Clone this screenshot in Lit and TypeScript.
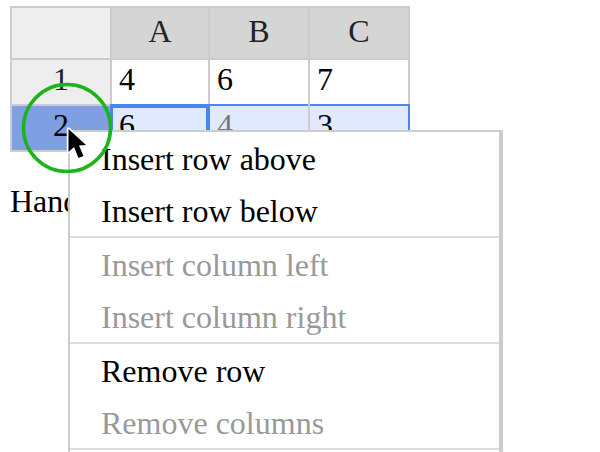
import { LitElement, html, css } from "lit";
import { customElement } from "lit/decorators.js";

@customElement("app-root")
export class AppRoot extends LitElement {
  static styles = css`
    :host { display: block; width: 600px; height: 452px; overflow: hidden; position: relative; background: #fff;
      font-family: "Liberation Serif", "Times New Roman", serif; font-size: 32px; color: #000; }
    .page { padding: 6px 10px 0; }
    .grid { display: grid; width: 400px; box-sizing: border-box; padding: 2px; gap: 2px; background: #ccc;
      grid-template-columns: 98px 96px 98px 98px; grid-template-rows: 50px 44px 44px; }
    .cell { box-sizing: border-box; padding: 0 7px; line-height: 38px; background: #fff; white-space: nowrap; }
    .corner { background: #eee; }
    .col { background: #d5d5d5; text-align: center; line-height: 46px; color: #222; }
    .row { background: #eee; text-align: center; color: #222; }
    .row.sel { background: #7f9fe2; color: #000; }
    .on { background: #e1e9fc; height: 46px; margin-top: -2px; }
    .on.a { margin: -2px -2px 0; padding-left: 6px; border: 4px solid #4a86f0; border-left-width: 3px; border-bottom: none; line-height: 34px; }
    .on.b { border-top: 2px solid #4a86f0; line-height: 38px; color: #777; }
    .on.c { margin-right: -2px; border-top: 2px solid #4a86f0; border-right: 2px solid #4a86f0; line-height: 38px; }
    .below { margin-top: 29px; line-height: 40px; }
    .menu { position: absolute; left: 68px; top: 130px; width: 435px; box-sizing: border-box; background: #fff;
      border: 2px solid #ccc; border-right-width: 4px; border-bottom: none; padding-bottom: 20px; }
    .item { height: 52px; line-height: 54px; padding-left: 31px; white-space: nowrap; }
    .item.off { color: #999; }
    .sep { height: 2px; background: #ddd; }
    .ring { position: absolute; left: 21px; top: 82px; width: 92px; height: 92px; }
    .cursor { position: absolute; left: 62px; top: 124px; width: 32px; height: 44px; }
  `;

  render() {
    return html`
      <div class="page">
        <div class="grid">
          <div class="cell corner"></div>
          <div class="cell col">A</div>
          <div class="cell col">B</div>
          <div class="cell col">C</div>
          <div class="cell row">1</div>
          <div class="cell">4</div>
          <div class="cell">6</div>
          <div class="cell">7</div>
          <div class="cell row sel">2</div>
          <div class="cell on a">6</div>
          <div class="cell on b">4</div>
          <div class="cell on c">3</div>
        </div>
        <div class="below">Hand</div>
      </div>
      <div class="menu">
        <div class="item">Insert row above</div>
        <div class="item">Insert row below</div>
        <div class="sep"></div>
        <div class="item off">Insert column left</div>
        <div class="item off">Insert column right</div>
        <div class="sep"></div>
        <div class="item">Remove row</div>
        <div class="item off">Remove columns</div>
        <div class="sep"></div>
      </div>
      <svg class="ring" viewBox="0 0 92 92">
        <circle cx="46" cy="46" r="43.5" fill="none" stroke="#1bb51b" stroke-width="3.5"/>
      </svg>
      <svg class="cursor" viewBox="0 0 32 44">
        <path d="M6.5 5 L6.5 28 L12 23 L16.5 34 L21.5 32 L17 21.5 L24 21 Z" fill="#000" stroke="#fff" stroke-width="3.5" stroke-linejoin="round" paint-order="stroke"/>
      </svg>
    `;
  }
}
